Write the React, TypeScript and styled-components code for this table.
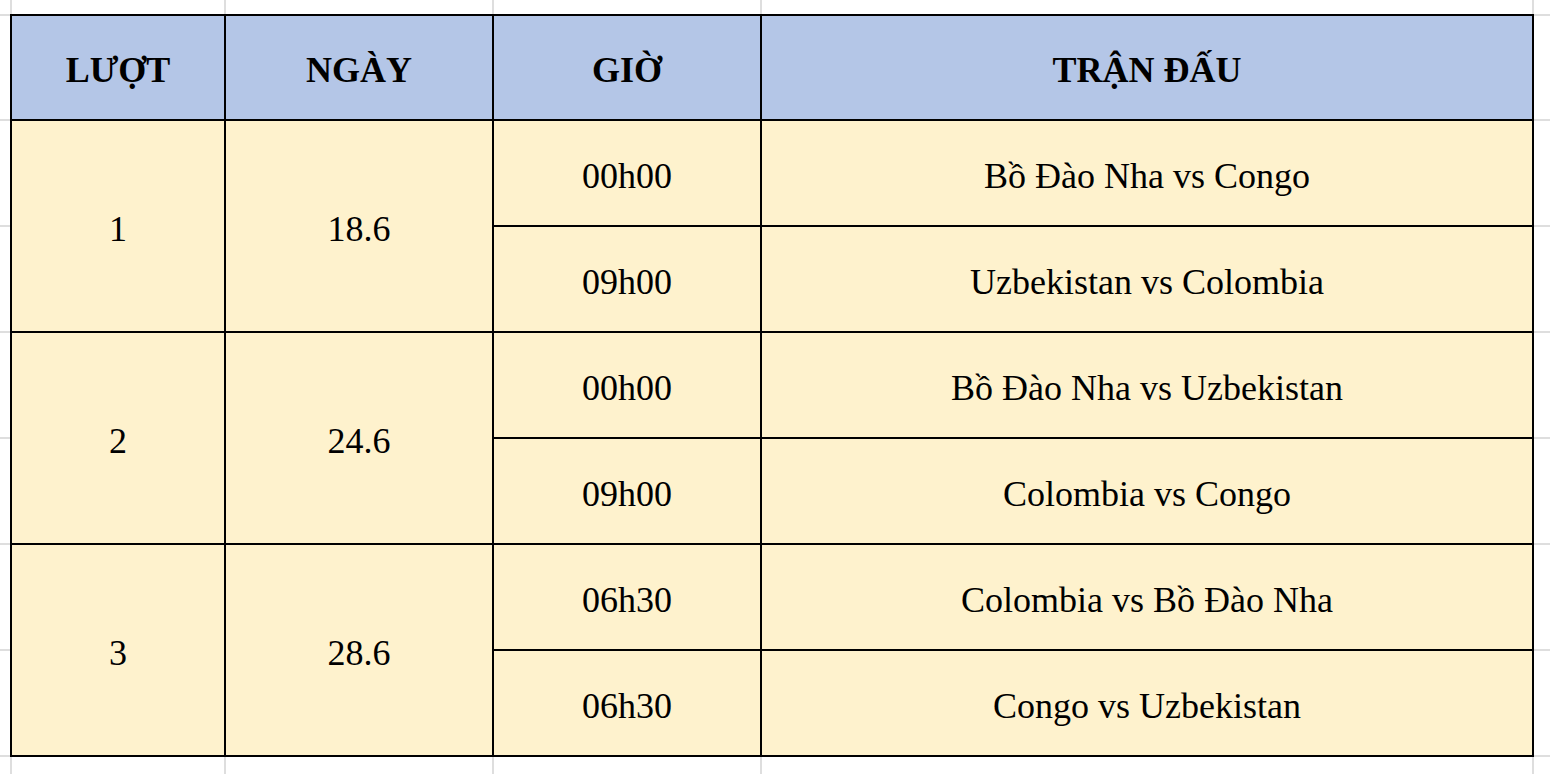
import React from "react"
import styled, { createGlobalStyle } from "styled-components"

const GlobalStyle = createGlobalStyle`
    html, body {
        margin: 0;
        padding: 0;
        background: #fff;
    }
`

// spreadsheet gridlines that show round the table
const cols = [11, 225, 493, 761, 1533]
const rows = [15, 120, 226, 332, 438, 544, 650, 756]
const gridLines = [
    ...cols.map((x) => `linear-gradient(#dedede, #dedede) ${x - 1}px 0 / 2px 100% no-repeat`),
    ...rows.map((y) => `linear-gradient(#dedede, #dedede) 0 ${y - 1}px / 100% 2px no-repeat`),
].join(", ")

const Sheet = styled.div`
    width: 1550px;
    height: 774px;
    box-sizing: border-box;
    padding: 14px 0 0 10px;
    background: ${gridLines};
    font-family: "Liberation Serif", "Times New Roman", serif;
    color: #000;
    overflow: hidden;
`

const Table = styled.div`
    display: inline-grid;
    grid-template-columns: 212px 266px 266px 770px;
    grid-template-rows: 103px repeat(6, 104px);
    gap: 2px;
    padding: 2px;
    background: #000;
`

const Cell = styled.div<{ $head?: boolean; $span?: number }>`
    display: flex;
    align-items: center;
    justify-content: center;
    padding-top: 5px;
    box-sizing: border-box;
    background: ${(p) => (p.$head ? "#b4c6e7" : "#fef2cd")};
    font-size: 36px;
    font-weight: ${(p) => (p.$head ? 700 : 400)};
    grid-row: ${(p) => (p.$span ? `span ${p.$span}` : "auto")};
    white-space: nowrap;
`

const rounds = [
    {
        round: "1",
        day: "18.6",
        games: [
            { time: "00h00", match: "Bồ Đào Nha vs Congo" },
            { time: "09h00", match: "Uzbekistan vs Colombia" },
        ],
    },
    {
        round: "2",
        day: "24.6",
        games: [
            { time: "00h00", match: "Bồ Đào Nha vs Uzbekistan" },
            { time: "09h00", match: "Colombia vs Congo" },
        ],
    },
    {
        round: "3",
        day: "28.6",
        games: [
            { time: "06h30", match: "Colombia vs Bồ Đào Nha" },
            { time: "06h30", match: "Congo vs Uzbekistan" },
        ],
    },
]

const App: React.FC = () => {
    return (
        <Sheet>
            <GlobalStyle />
            <Table>
                <Cell $head>LƯỢT</Cell>
                <Cell $head>NGÀY</Cell>
                <Cell $head>GIỜ</Cell>
                <Cell $head>TRẬN ĐẤU</Cell>
                {rounds.map((r) => (
                    <React.Fragment key={r.round}>
                        <Cell $span={2}>{r.round}</Cell>
                        <Cell $span={2}>{r.day}</Cell>
                        <Cell>{r.games[0].time}</Cell>
                        <Cell>{r.games[0].match}</Cell>
                        <Cell>{r.games[1].time}</Cell>
                        <Cell>{r.games[1].match}</Cell>
                    </React.Fragment>
                ))}
            </Table>
        </Sheet>
    )
}

export default App
